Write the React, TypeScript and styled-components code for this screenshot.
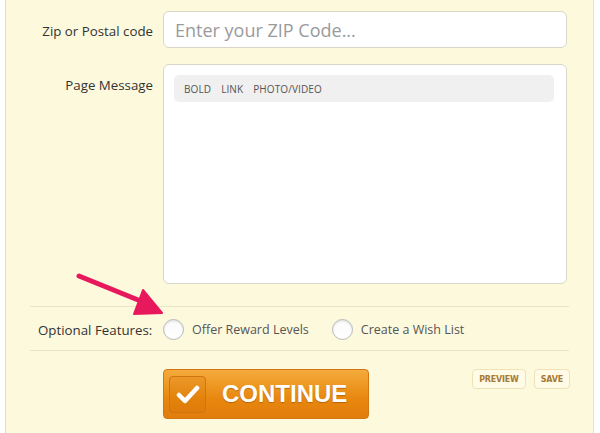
import { FC } from 'react'
import styled, { createGlobalStyle } from 'styled-components'

const GlobalStyle = createGlobalStyle`
    html, body {
        margin: 0;
        padding: 0;
        background: #ffffff;
    }
    body {
        font-family: 'Open Sans', 'DejaVu Sans', sans-serif;
    }
`
const Page = styled.div`
    width: 600px;
    height: 433px;
    overflow: hidden;
    padding-left: 5px;
    box-sizing: border-box;
    background: #ffffff;
`
const Panel = styled.div`
    position: relative;
    width: 589px;
    height: 433px;
    box-sizing: border-box;
    background: #fdf9dd;
    border-left: 1px solid #dcdcdc;
    border-right: 1px solid #e6e2d0;
    padding-top: 11px;
`
const FieldRow = styled.div<{ $top?: number }>`
    display: grid;
    grid-template-columns: 147px 404px;
    column-gap: 10px;
    margin-top: ${p => p.$top || 0}px;
`
const Label = styled.label<{ $pad?: number }>`
    text-align: right;
    color: #333333;
    font-size: 13.3px;
    padding-top: ${p => p.$pad || 0}px;
    line-height: 16px;
`
const TextInput = styled.div`
    height: 37px;
    box-sizing: border-box;
    background: #ffffff;
    border: 1px solid #d9d6c8;
    border-radius: 6px;
    padding: 0 11px;
    display: flex;
    align-items: center;
    color: #9a9a9a;
    font-size: 18px;
`
const TextArea = styled.div`
    height: 220px;
    box-sizing: border-box;
    background: #ffffff;
    border: 1px solid #d9d6c8;
    border-radius: 6px;
    padding: 10px 12px 0 10px;
`
const Toolbar = styled.div`
    height: 27px;
    background: #f0f0f0;
    border-radius: 5px;
    display: flex;
    align-items: center;
    gap: 10px;
    padding-left: 10px;
`
const ToolButton = styled.span`
    font-size: 10px;
    color: #555555;
    letter-spacing: 0.1px;
`
const Divider = styled.hr`
    margin: 0 0 0 24px;
    width: 539px;
    border: none;
    border-top: 1px solid #ebe5c6;
`
const OptionsRow = styled.div`
    display: flex;
    align-items: center;
    height: 43px;
    padding-left: 32px;
    padding-top: 2px;
    box-sizing: border-box;
`
const OptionsLabel = styled.span`
    font-size: 13.3px;
    color: #333333;
    width: 125px;
`
const Option = styled.label`
    display: flex;
    align-items: center;
    gap: 8px;
    margin-right: 23px;
    font-size: 12.5px;
    color: #555555;
`
const Radio = styled.span`
    width: 21px;
    height: 21px;
    box-sizing: border-box;
    border-radius: 50%;
    border: 1px solid #b9b9b9;
    background: linear-gradient(#fafafa, #ffffff);
    box-shadow: inset 0 1px 2px rgba(0, 0, 0, 0.12);
`
const ActionRow = styled.div`
    display: flex;
    align-items: flex-start;
    margin-top: 18px;
    padding-left: 157px;
`
const ContinueButton = styled.button`
    width: 206px;
    height: 50px;
    box-sizing: border-box;
    border: 1px solid #d27613;
    border-radius: 4px;
    background: linear-gradient(#f4ab3c, #e8870f 60%, #e17d0b);
    display: flex;
    align-items: center;
    padding: 0 0 0 5px;
    gap: 16px;
    color: #ffffff;
    font-family: 'Liberation Sans', Arial, sans-serif;
    font-weight: bold;
    font-size: 24px;
    text-shadow: 0 1px 1px rgba(150, 80, 0, 0.6);
    cursor: pointer;
`
const CheckBox = styled.span`
    width: 37px;
    height: 37px;
    box-sizing: border-box;
    border: 1px solid #cf7412;
    border-radius: 4px;
    background: rgba(200, 100, 0, 0.15);
    display: flex;
    align-items: center;
    justify-content: center;
`
const SmallButtons = styled.div`
    display: flex;
    gap: 8px;
    margin-left: auto;
    margin-right: 23px;
`
const SmallButton = styled.button`
    height: 20px;
    box-sizing: border-box;
    padding: 0 6px;
    border: 1px solid #efe2b8;
    border-radius: 4px;
    background: #fffbe6;
    color: #a57a36;
    font-family: 'DejaVu Sans', sans-serif;
    font-weight: bold;
    font-size: 8px;
    letter-spacing: -0.2px;
    cursor: pointer;
`
const Arrow = styled.svg`
    position: absolute;
    left: -6px;
    top: 0;
    pointer-events: none;
`

const App: FC = () => {
    return (
        <Page>
            <GlobalStyle />
            <Panel>
                <FieldRow>
                    <Label $pad={12}>Zip or Postal code</Label>
                    <TextInput>Enter your ZIP Code...</TextInput>
                </FieldRow>
                <FieldRow $top={16}>
                    <Label $pad={13}>Page Message</Label>
                    <TextArea>
                        <Toolbar>
                            <ToolButton>BOLD</ToolButton>
                            <ToolButton>LINK</ToolButton>
                            <ToolButton>PHOTO/VIDEO</ToolButton>
                        </Toolbar>
                    </TextArea>
                </FieldRow>
                <div style={{ height: 22 }} />
                <Divider />
                <OptionsRow>
                    <OptionsLabel>Optional Features:</OptionsLabel>
                    <Option><Radio />Offer Reward Levels</Option>
                    <Option><Radio />Create a Wish List</Option>
                </OptionsRow>
                <Divider />
                <ActionRow>
                    <ContinueButton>
                        <CheckBox>
                            <svg width="24" height="20" viewBox="0 0 24 20">
                                <path d="M3 11 L9 17 L21 4" fill="none" stroke="#ffffff" strokeWidth="4.5" strokeLinecap="round" strokeLinejoin="round" />
                            </svg>
                        </CheckBox>
                        CONTINUE
                    </ContinueButton>
                    <SmallButtons>
                        <SmallButton>PREVIEW</SmallButton>
                        <SmallButton>SAVE</SmallButton>
                    </SmallButtons>
                </ActionRow>
                <Arrow width="600" height="433" viewBox="0 0 600 433">
                    <path d="M79 276 L148 304" stroke="#e8185c" strokeWidth="5" strokeLinecap="round" />
                    <path d="M143 290 L162 313 L134 314 Z" fill="#e8185c" stroke="#e8185c" strokeWidth="2" strokeLinejoin="round" />
                </Arrow>
            </Panel>
        </Page>
    )
}

export default App
